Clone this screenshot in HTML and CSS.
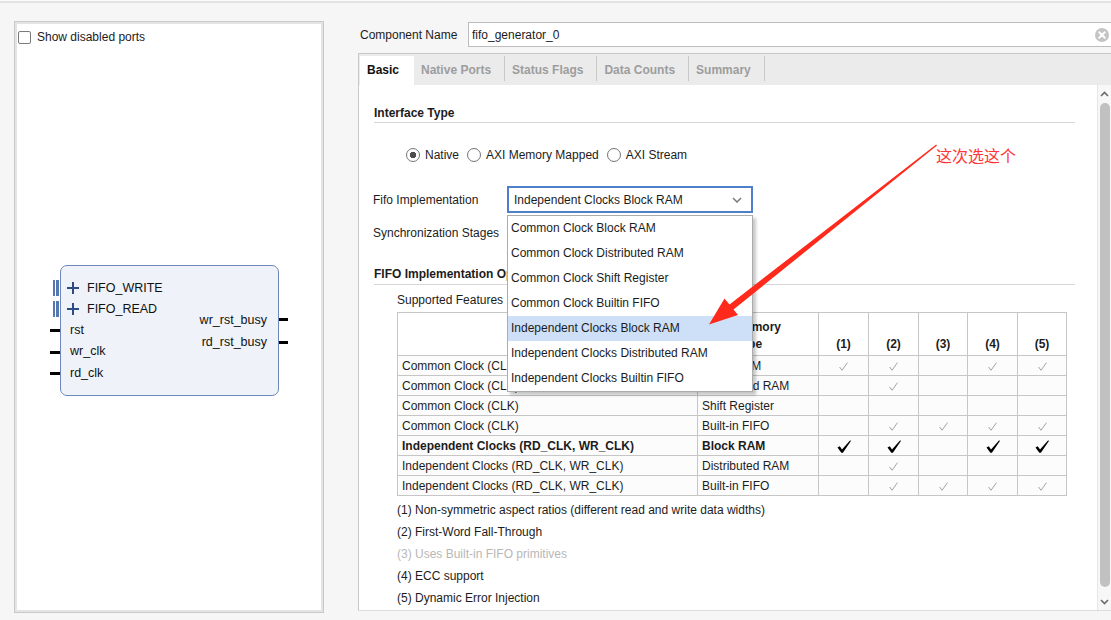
FILE: index.html
```html
<!DOCTYPE html>
<html>
<head>
<meta charset="utf-8">
<link rel="stylesheet" href="styles.css">
</head>
<body>
<div class="topline"></div>
<div class="main">
  <aside class="left-panel">
    <label class="chk"><span class="chk-box"></span>Show disabled ports</label>
    <div class="block">
      <div class="block-left">
        <div class="port bus"><span class="bars"></span><span class="plus"></span><span>FIFO_WRITE</span></div>
        <div class="port bus"><span class="bars"></span><span class="plus"></span><span>FIFO_READ</span></div>
        <div class="port sig">rst</div>
        <div class="port sig">wr_clk</div>
        <div class="port sig">rd_clk</div>
      </div>
      <div class="block-right">
        <div class="port out">wr_rst_busy</div>
        <div class="port out">rd_rst_busy</div>
      </div>
    </div>
  </aside>
  <section class="right">
    <div class="name-row">
      <span class="name-label">Component Name</span>
      <div class="name-input">
        <span>fifo_generator_0</span>
        <svg class="clear" width="14" height="14" viewBox="0 0 14 14"><circle cx="7" cy="7" r="7" fill="#c4c4c4"/><path d="M4.2 4.2 L9.8 9.8 M9.8 4.2 L4.2 9.8" stroke="#fff" stroke-width="2" stroke-linecap="round"/></svg>
      </div>
    </div>
    <div class="tabs-box">
      <div class="tabbar">
        <div class="tab active">Basic</div>
        <div class="tab">Native Ports</div>
        <div class="tab">Status Flags</div>
        <div class="tab">Data Counts</div>
        <div class="tab">Summary</div>
      </div>
      <div class="content-wrap">
        <div class="content">
          <div class="sec-title first">Interface Type</div>
          <div class="radio-row">
            <span class="radio on"></span><span class="rlabel">Native</span>
            <span class="radio"></span><span class="rlabel">AXI Memory Mapped</span>
            <span class="radio"></span><span class="rlabel">AXI Stream</span>
          </div>
          <div class="field-row impl">
            <span class="flabel">Fifo Implementation</span>
            <div class="select-wrap">
              <div class="select">
                <span>Independent Clocks Block RAM</span>
                <svg width="10" height="6" viewBox="0 0 10 6"><path d="M1 1 L5 5 L9 1" fill="none" stroke="#7a7a7a" stroke-width="1.5"/></svg>
              </div>
              <div class="dropdown">
                <div class="opt">Common Clock Block RAM</div>
                <div class="opt">Common Clock Distributed RAM</div>
                <div class="opt">Common Clock Shift Register</div>
                <div class="opt">Common Clock Builtin FIFO</div>
                <div class="opt sel">Independent Clocks Block RAM</div>
                <div class="opt">Independent Clocks Distributed RAM</div>
                <div class="opt">Independent Clocks Builtin FIFO</div>
              </div>
            </div>
          </div>
          <div class="field-row sync">
            <span class="flabel">Synchronization Stages</span>
          </div>
          <div class="sec-title second">FIFO Implementation Options</div>
          <div class="sub-label">Supported Features</div>
          <table class="feat">
            <colgroup>
              <col class="c1"><col class="c2"><col class="c3"><col class="c4"><col class="c5"><col class="c6"><col class="c7">
            </colgroup>
            <thead>
              <tr><th></th><th><span class="hdr2">Memory<br>Type</span></th><th>(1)</th><th>(2)</th><th>(3)</th><th>(4)</th><th>(5)</th></tr>
            </thead>
            <tbody>
              <tr><td>Common Clock (CLK)</td><td>Block RAM</td><td class="g"><i></i></td><td class="g"><i></i></td><td></td><td class="g"><i></i></td><td class="g"><i></i></td></tr>
              <tr><td>Common Clock (CLK)</td><td>Distributed RAM</td><td></td><td class="g"><i></i></td><td></td><td></td><td></td></tr>
              <tr><td>Common Clock (CLK)</td><td>Shift Register</td><td></td><td></td><td></td><td></td><td></td></tr>
              <tr><td>Common Clock (CLK)</td><td>Built-in FIFO</td><td></td><td class="g"><i></i></td><td class="g"><i></i></td><td class="g"><i></i></td><td class="g"><i></i></td></tr>
              <tr class="bold"><td>Independent Clocks (RD_CLK, WR_CLK)</td><td>Block RAM</td><td class="b"><i></i></td><td class="b"><i></i></td><td></td><td class="b"><i></i></td><td class="b"><i></i></td></tr>
              <tr><td>Independent Clocks (RD_CLK, WR_CLK)</td><td>Distributed RAM</td><td></td><td class="g"><i></i></td><td></td><td></td><td></td></tr>
              <tr><td>Independent Clocks (RD_CLK, WR_CLK)</td><td>Built-in FIFO</td><td></td><td class="g"><i></i></td><td class="g"><i></i></td><td class="g"><i></i></td><td class="g"><i></i></td></tr>
            </tbody>
          </table>
          <div class="notes">
            <div>(1) Non-symmetric aspect ratios (different read and write data widths)</div>
            <div>(2) First-Word Fall-Through</div>
            <div class="dim">(3) Uses Built-in FIFO primitives</div>
            <div>(4) ECC support</div>
            <div>(5) Dynamic Error Injection</div>
          </div>
        </div>
        <div class="scrollbar">
          <svg class="sb-up" width="9" height="6" viewBox="0 0 9 6"><path d="M1 5 L4.5 1.5 L8 5" fill="none" stroke="#6a6a6a" stroke-width="1.6"/></svg>
          <div class="thumb"></div>
          <svg class="sb-down" width="9" height="6" viewBox="0 0 9 6"><path d="M1 1 L4.5 4.5 L8 1" fill="none" stroke="#6a6a6a" stroke-width="1.6"/></svg>
        </div>
      </div>
    </div>
  </section>
</div>
<svg class="annot-arrow" width="1111" height="620" viewBox="0 0 1111 620">
  <polygon points="937,145.6 733.5,309.5 738,315 709,324.5 724.5,298.5 729.5,304.5 936.2,144.4" fill="#ff2a1c"/>
</svg>
<div class="annot-text">这次选这个</div>
</body>
</html>
```
FILE: styles.css
```css
* { box-sizing: border-box; }
html, body { margin: 0; padding: 0; overflow: hidden; }
body {
  width: 1111px; height: 620px; position: relative;
  background: #f6f6f6;
  font-family: "Liberation Sans", Arial, sans-serif;
  font-size: 12px; color: #1c1c1c;
}
.topline { height: 3px; background: #fbfbfb; border-bottom: 2px solid #e3e3e3; }
.main { display: flex; padding: 18px 0 0 14px; }

/* left panel */
.left-panel {
  width: 310px; height: 592px; flex: none;
  background: #fff; border: 1px solid #c9c9c9;
  box-shadow: inset 0 0 0 2px #e4e4e4;
  padding: 9px 0 0 3px;
}
.chk { display: flex; align-items: center; height: 13px; line-height: 13px; }
.chk-box { width: 13px; height: 13px; border: 1px solid #7a7a7a; border-radius: 2px; background: #fff; margin-right: 6px; }
.block {
  margin: 221px 0 0 42px; width: 219px; height: 131px;
  border: 1px solid #6c88b8; border-radius: 7px;
  background: #eff3f9;
  display: flex; justify-content: space-between;
  font-size: 12.5px; color: #111;
}
.block-left { padding-top: 11.5px; }
.block-right { padding-top: 42.5px; padding-right: 11px; }
.port { height: 21.3px; line-height: 21.3px; position: relative; white-space: nowrap; }
.port.bus { display: flex; align-items: center; padding-left: 4px; }
.bars { width: 6px; height: 16px; margin-left: -12px; margin-right: 8px;
  background: linear-gradient(90deg, #5577b0 0 2px, transparent 2px 3px, #5577b0 3px 6px); }
.plus { width: 12px; height: 12px; margin-right: 8px;
  background: linear-gradient(#2c4c84, #2c4c84) center / 12px 2px no-repeat,
              linear-gradient(#2c4c84, #2c4c84) center / 2px 12px no-repeat; }
.port.sig { padding-left: 9px; }
.port.sig::before { content: ""; position: absolute; left: -11px; top: 50%; margin-top: -1.5px; width: 10px; height: 3px; background: #000; }
.port.out { text-align: right; height: 22.5px; line-height: 22.5px; }
.port.out::after { content: ""; position: absolute; right: -21px; top: 50%; margin-top: -1.5px; width: 9px; height: 3px; background: #000; }

/* right */
.right { width: 753px; margin-left: 34px; flex: none; }
.name-row { display: flex; align-items: center; height: 25px; margin-top: 1px; }
.name-label { width: 110px; padding-left: 2px; flex: none; }
.name-input {
  flex: 1; height: 25px; margin-right: -2px;
  border: 1px solid #bdbdbd; background: #fff;
  display: flex; align-items: center; justify-content: space-between;
  padding: 0 3px 0 3px;
}
.tabs-box {
  margin-top: 6px; height: 558px;
  border-top: 1px solid #c9c9c9; border-left: 1px solid #c9c9c9; border-bottom: 1px solid #dcdcdc;
  display: flex; flex-direction: column;
}
.tabbar { height: 31px; background: #ebebeb; display: flex; padding: 2px 0 0 1px; flex: none; }
.tab {
  height: 29px; line-height: 29px; padding: 0 14px 0 7px;
  font-weight: bold; color: #9d9d9d;
  background: linear-gradient(#c8c8c8, #c8c8c8) right 0 top 0 / 1px 25px no-repeat;
}
.tab.active { background: #fff; color: #111; padding-right: 15px; }
.content-wrap { flex: 1; display: flex; min-height: 0; }
.content { flex: 1; background: #fff; padding: 0 22px 0 15px; position: relative; }
.scrollbar {
  width: 14px; flex: none; background: #f7f7f7; border-left: 1px solid #e6e6e6;
  display: flex; flex-direction: column; align-items: center;
}
.sb-up { margin-top: 6px; }
.thumb { width: 10px; height: 484px; margin-top: 6px; border-radius: 5px; background: #c1c1c1; }
.sb-down { margin-top: 12px; }

.sec-title { font-weight: bold; line-height: 16px; padding-bottom: 2px; border-bottom: 1px solid #d6d6d6; white-space: nowrap; }
.sec-title.first { margin-top: 20px; padding-bottom: 1px; }
.sec-title.second { margin-top: 21px; }
.radio-row { display: flex; align-items: center; height: 14px; margin-top: 25px; padding-left: 32px; }
.radio { width: 14px; height: 14px; border: 1px solid #767676; border-radius: 50%;
  background: radial-gradient(circle, #fff 0 55%, #f0f0f0 100%); flex: none; }
.radio.on { background: radial-gradient(circle, #4d4d4d 0 3px, #fff 3.5px); }
.rlabel { margin: 0 8px 0 5px; }
.field-row { display: flex; align-items: center; }
.field-row.impl { height: 27px; margin-top: 24px; }
.field-row.sync { height: 24px; margin-top: 8px; }
.flabel { width: 133px; flex: none; margin-left: -1px; }
.select-wrap { position: relative; width: 246px; height: 27px; margin-left: 1px; }
.select {
  height: 27px; border: 2px solid #4f7fcb; background: #fff;
  display: flex; align-items: center; justify-content: space-between;
  padding: 0 9px 0 5px;
}
.dropdown {
  position: absolute; left: 0; top: 29px; width: 246px; height: 177px; z-index: 5;
  background: #fff; border: 1px solid #acacac;
  box-shadow: 3px 3px 3px rgba(0,0,0,0.22);
}
.opt { height: 25px; line-height: 25px; padding-left: 3px; white-space: nowrap; }
.opt.sel { background: #cde0f8; }

.sub-label { margin: 7px 0 0 23px; line-height: 16px; }
.feat {
  margin: 4px 0 0 23px; border-collapse: collapse; table-layout: fixed; width: 670px;
  border: 1px solid #c6c6c6;
}
.feat col.c1 { width: 300px; }
.feat col.c2 { width: 121px; }
.feat col.c3, .feat col.c4, .feat col.c6 { width: 50px; }
.feat col.c5, .feat col.c7 { width: 49px; }
.feat th {
  height: 43px; border: 1px solid #c6c6c6; background: #fff;
  font-weight: bold; vertical-align: bottom; text-align: center;
  line-height: 17px; padding: 0 0 2px 0;
}
.hdr2 { display: inline-block; text-align: left; }
.feat td {
  height: 20px; border: 1px solid #c6c6c6; background: #fcfcfc;
  padding: 1px 4px 0 4px; line-height: 18px; white-space: nowrap; overflow: hidden;
}
.feat tr.bold td { font-weight: bold; }
.feat td.g, .feat td.b { text-align: center; padding: 0; }
.feat td i { display: inline-block; vertical-align: middle; }
.feat td.g i { width: 9px; height: 9px;
  background: url("data:image/svg+xml;utf8,<svg xmlns='http://www.w3.org/2000/svg' width='9' height='9' viewBox='0 0 9 9'><path d='M0.6 5 L3 8.3 L8.5 0.6' fill='none' stroke='%23a3a3a3' stroke-width='1'/></svg>") no-repeat; }
.feat td.b i { width: 14px; height: 13px;
  background: url("data:image/svg+xml;utf8,<svg xmlns='http://www.w3.org/2000/svg' width='14' height='13' viewBox='0 0 14 13'><polygon points='0.5,7.6 2.8,6.2 5,9.4 13.2,0.3 13.9,0.9 5.9,12.8 4.3,12.8' fill='%23000'/></svg>") no-repeat; }
.notes { margin: 3px 0 0 23px; }
.notes div { line-height: 22px; white-space: nowrap; }
.notes .dim { color: #b7b7b7; }

/* annotation overlay */
.annot-arrow { position: absolute; left: 0; top: 0; pointer-events: none; z-index: 10; }
.annot-text {
  position: absolute; left: 936px; top: 145px; z-index: 10;
  font-family: "Noto Sans CJK SC", sans-serif; font-size: 16px; line-height: 20px;
  color: #ff3636; white-space: nowrap;
}
```
